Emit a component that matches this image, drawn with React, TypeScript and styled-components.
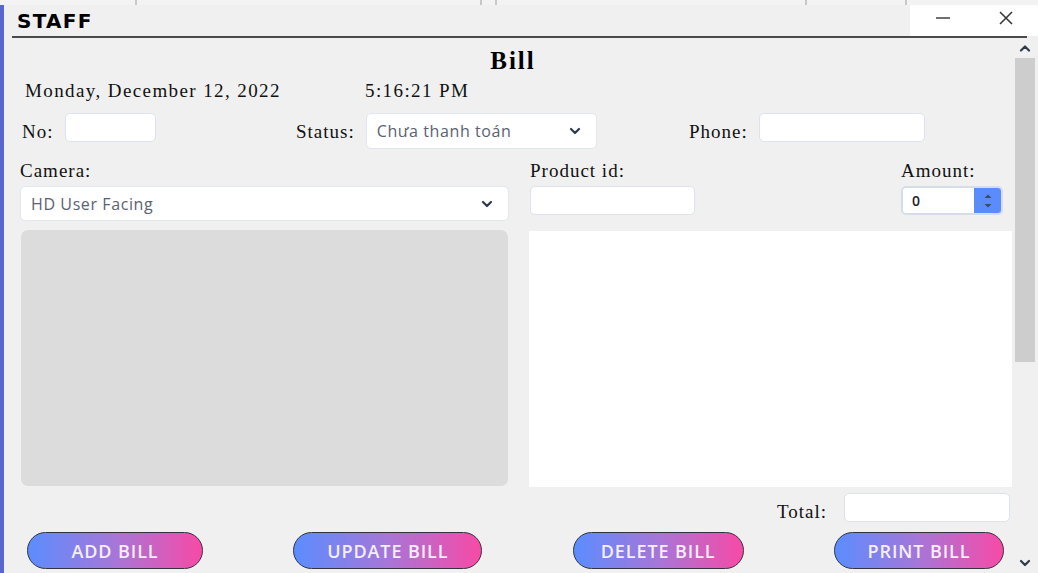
import styled, { createGlobalStyle } from 'styled-components';

const GlobalStyle = createGlobalStyle`
  html, body {
    margin: 0;
    padding: 0;
    background: #ffffff;
    overflow: hidden;
  }
  * { box-sizing: border-box; }
`;

const serif = `"Liberation Serif", "Times New Roman", serif`;
const sans = `"Open Sans", "Noto Sans", sans-serif`;

function Chevron({ up }: { up?: boolean }) {
  return (
    <svg width='12' height='8' viewBox='0 0 12 8'>
      <path
        d={up ? 'M2 6.5 L6 2.5 L10 6.5' : 'M2 2 L6 6 L10 2'}
        fill='none'
        stroke='#2f3a4c'
        strokeWidth='2.2'
        strokeLinecap='round'
        strokeLinejoin='round'
      />
    </svg>
  );
}

export default function App() {
  return (
    <>
      <GlobalStyle />
      <Window>
        <TopStrip>
          <Tick style={{ left: 135 }} />
          <Tick style={{ left: 480 }} />
          <Tick style={{ left: 495 }} />
          <Tick style={{ left: 805 }} />
          <Tick style={{ left: 905 }} />
        </TopStrip>
        <Frame>
          <TitleBar>
            <TitleArea>
              <Title>STAFF</Title>
            </TitleArea>
            <Controls>
              <svg width='16' height='12' viewBox='0 0 16 12'>
                <line x1='1' y1='6' x2='15' y2='6' stroke='#333' strokeWidth='1.4' />
              </svg>
              <svg width='16' height='16' viewBox='0 0 16 16'>
                <path d='M2 2 L14 14 M14 2 L2 14' stroke='#333' strokeWidth='1.5' />
              </svg>
            </Controls>
          </TitleBar>
          <Divider />
          <Body>
            <Content>
              <Heading>Bill</Heading>
              <DateRow>
                <span>Monday, December 12, 2022</span>
                <span>5:16:21 PM</span>
              </DateRow>

              <InfoRow>
                <InlineField>
                  <Label $top={10}>No:</Label>
                  <TextBox $w={91} $h={29} />
                </InlineField>
                <InlineField>
                  <Label $top={10}>Status:</Label>
                  <Select $w={231} $h={36}>
                    <span>Chưa thanh toán</span>
                    <Chevron />
                  </Select>
                </InlineField>
                <InlineField>
                  <Label $top={10}>Phone:</Label>
                  <TextBox $w={166} $h={29} />
                </InlineField>
              </InfoRow>

              <Columns>
                <Column>
                  <Label>Camera:</Label>
                  <Select $w={489} $h={35}>
                    <span>HD User Facing</span>
                    <Chevron />
                  </Select>
                  <Preview />
                </Column>
                <Column>
                  <RightTop>
                    <StackField>
                      <Label>Product id:</Label>
                      <TextBox $w={165} $h={29} />
                    </StackField>
                    <StackField>
                      <Label>Amount:</Label>
                      <SpinBox>
                        <SpinValue>0</SpinValue>
                        <SpinButtons>
                          <svg width='10' height='20' viewBox='0 0 10 20'>
                            <path d='M1.5 7 L5 3.5 L8.5 7 Z' fill='#3a4a6a' />
                            <path d='M1.5 13 L5 16.5 L8.5 13 Z' fill='#3a4a6a' />
                          </svg>
                        </SpinButtons>
                      </SpinBox>
                    </StackField>
                  </RightTop>
                  <Table />
                  <TotalRow>
                    <Label $top={10}>Total:</Label>
                    <TextBox $w={166} $h={29} />
                  </TotalRow>
                </Column>
              </Columns>

              <Buttons>
                <GradientButton $w={176}>ADD BILL</GradientButton>
                <GradientButton $w={189}>UPDATE BILL</GradientButton>
                <GradientButton $w={171}>DELETE BILL</GradientButton>
                <GradientButton $w={170}>PRINT BILL</GradientButton>
              </Buttons>
            </Content>
            <Scrollbar>
              <Chevron up />
              <Thumb />
              <Track />
              <Chevron />
            </Scrollbar>
          </Body>
        </Frame>
      </Window>
    </>
  );
}

const Window = styled.div`
  width: 1038px;
  height: 573px;
  display: flex;
  flex-direction: column;
  background: #ffffff;
  overflow: hidden;
`;

const TopStrip = styled.div`
  position: relative;
  height: 5px;
  background: #f3f3f3;
  flex-shrink: 0;
`;

const Tick = styled.div`
  position: absolute;
  top: 0;
  width: 2px;
  height: 5px;
  background: #c8c8c8;
`;

const Frame = styled.div`
  flex: 1;
  display: flex;
  flex-direction: column;
  border-left: 4px solid #5866cf;
  background: #f0f0f0;
  min-height: 0;
`;

const TitleBar = styled.div`
  display: flex;
  height: 31px;
  flex-shrink: 0;
`;

const TitleArea = styled.div`
  flex: 1;
  display: flex;
  align-items: center;
  padding-left: 13px;
  background: #f0f0f0;
`;

const Title = styled.div`
  font-family: "DejaVu Sans", "Open Sans", sans-serif;
  font-weight: 700;
  font-size: 20px;
  letter-spacing: 1.3px;
  color: #000;
`;

const Controls = styled.div`
  width: 128px;
  background: #ffffff;
  display: flex;
  align-items: center;
  justify-content: space-between;
  padding: 0 24px 6px 25px;
`;

const Divider = styled.div`
  height: 2px;
  margin: 0 11px 0 8px;
  background: #4a4a4a;
  flex-shrink: 0;
`;

const Body = styled.div`
  flex: 1;
  display: flex;
  min-height: 0;
`;

const Content = styled.div`
  flex: 1;
  display: flex;
  flex-direction: column;
  padding: 9px 0 0 16px;
`;

const Heading = styled.h1`
  margin: 0;
  font-family: ${serif};
  font-weight: 700;
  font-size: 25px;
  line-height: 28px;
  letter-spacing: 2px;
  text-align: center;
  color: #000;
  padding-right: 8px;
`;

const DateRow = styled.div`
  display: grid;
  grid-template-columns: 340px auto;
  padding-left: 5px;
  margin-top: 6px;
  font-family: ${serif};
  font-size: 19px;
  line-height: 20px;
  letter-spacing: 1.4px;
  color: #111;
`;

const InfoRow = styled.div`
  display: grid;
  grid-template-columns: 274px 393px auto;
  padding-left: 2px;
  margin-top: 12px;
  height: 36px;
`;

const InlineField = styled.div`
  display: flex;
  align-items: flex-start;
  gap: 11px;
`;

const Label = styled.label<{ $top?: number }>`
  font-family: ${serif};
  font-size: 19px;
  line-height: 18px;
  letter-spacing: 1px;
  color: #111;
  margin-top: ${(p) => p.$top ?? 0}px;
  white-space: nowrap;
`;

const TextBox = styled.div<{ $w: number; $h: number }>`
  width: ${(p) => p.$w}px;
  height: ${(p) => p.$h}px;
  background: #ffffff;
  border: 1px solid #dde3ec;
  border-radius: 5px;
  flex-shrink: 0;
`;

const Select = styled.div<{ $w: number; $h: number }>`
  width: ${(p) => p.$w}px;
  height: ${(p) => p.$h}px;
  background: #ffffff;
  border: 1px solid #e2e6ee;
  border-radius: 5px;
  display: flex;
  align-items: center;
  justify-content: space-between;
  padding: 0 15px 0 10px;
  font-family: ${sans};
  font-size: 16px;
  letter-spacing: 0.6px;
  color: #5a6272;
  flex-shrink: 0;
`;

const Columns = styled.div`
  display: grid;
  grid-template-columns: 489px 482px;
  column-gap: 21px;
  margin-top: 13px;
`;

const Column = styled.div`
  display: flex;
  flex-direction: column;
  gap: 6px;
`;

const Preview = styled.div`
  margin-top: 3px;
  height: 256px;
  background: #dcdcdc;
  border-radius: 7px;
  margin-left: 1px;
  margin-right: 1px;
`;

const RightTop = styled.div`
  display: flex;
  justify-content: space-between;
  padding-right: 9px;
`;

const StackField = styled.div`
  display: flex;
  flex-direction: column;
  gap: 6px;
`;

const SpinBox = styled.div`
  width: 102px;
  height: 29px;
  display: flex;
  background: #ffffff;
  border: 2px solid #d5dcea;
  border-radius: 5px;
  overflow: hidden;
`;

const SpinValue = styled.div`
  flex: 1;
  display: flex;
  align-items: center;
  padding-left: 9px;
  font-family: ${sans};
  font-weight: 600;
  font-size: 14px;
  color: #222;
`;

const SpinButtons = styled.div`
  width: 27px;
  background: #5b8cff;
  display: flex;
  align-items: center;
  justify-content: center;
`;

const Table = styled.div`
  margin-top: 10px;
  height: 256px;
  background: #ffffff;
  margin-left: -1px;
`;

const TotalRow = styled.div`
  display: flex;
  justify-content: flex-end;
  align-items: flex-start;
  gap: 17px;
  padding-right: 2px;
  height: 29px;
`;

const Buttons = styled.div`
  display: flex;
  justify-content: space-between;
  margin-top: 10px;
  padding-left: 7px;
  padding-right: 10px;
`;

const GradientButton = styled.button<{ $w: number }>`
  width: ${(p) => p.$w}px;
  height: 37px;
  border: 1.5px solid #33333f;
  border-radius: 19px;
  background: linear-gradient(90deg, #5b8dff 0%, #a676d8 50%, #f84aa6 100%);
  color: #f5eef8;
  font-family: ${sans};
  font-weight: 600;
  font-size: 18px;
  letter-spacing: 0.9px;
  cursor: pointer;
`;

const Scrollbar = styled.div`
  width: 22px;
  margin-right: 2px;
  display: flex;
  flex-direction: column;
  align-items: center;
  padding: 6px 0 6px;
  gap: 2px;
  background: #f0f0f0;
`;

const Thumb = styled.div`
  width: 20px;
  height: 304px;
  background: #cdcdcd;
  margin-top: 4px;
`;

const Track = styled.div`
  flex: 1;
`;
